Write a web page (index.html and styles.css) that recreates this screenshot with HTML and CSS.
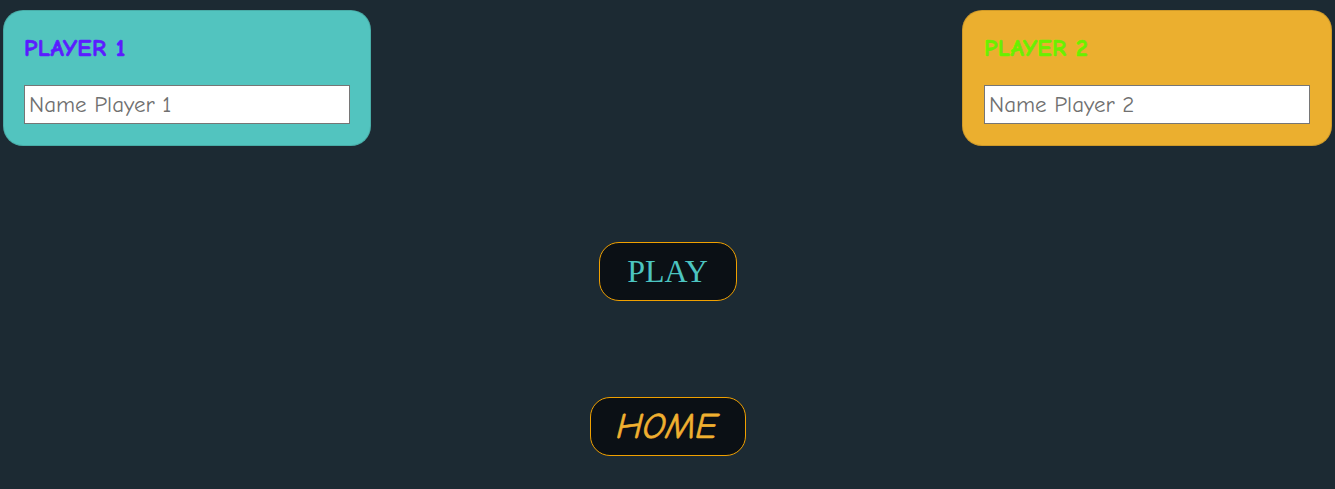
FILE: index.html
```html
<!DOCTYPE html>
<html lang="en">
<head>
    <meta charset="UTF-8">
    <title>Players</title>
    <link rel="stylesheet" href="styles.css">
</head>
<body>
    <div class="players">
        <div class="player player-one">
            <h2>PLAYER 1</h2>
            <input type="text" placeholder="Name Player 1">
        </div>
        <div class="player player-two">
            <h2>PLAYER 2</h2>
            <input type="text" placeholder="Name Player 2">
        </div>
    </div>
    <div class="actions">
        <button class="play">PLAY</button>
        <button class="home"><span>HOME</span></button>
    </div>
</body>
</html>
```

FILE: styles.css
```css
body {
    margin: 0;
    padding: 10px 3px;
    background-color: #1c2a33;
    font-family: "Comic Sans MS", "Comic Neue", "Open Sans", sans-serif;
}
.players {
    display: flex;
    justify-content: space-between;
}
.player {
    width: 326px;
    padding: 23px 20px 21px;
    border-radius: 20px;
    border: 1px solid rgba(0, 0, 0, 0.12);
}
.player h2 {
    margin: 0 0 23px;
    font-size: 24px;
    line-height: 28px;
    font-weight: bold;
    -webkit-text-stroke: 0.7px currentColor;
    letter-spacing: 0.5px;
}
.player-one {
    background-color: #52c4bf;
}
.player-one h2 {
    color: #5b1cff;
}
.player-two {
    background-color: #ebaf2f;
    padding-left: 21px;
    padding-right: 21px;
}
.player-two h2 {
    color: #6af000;
}
.player input {
    display: block;
    box-sizing: border-box;
    width: 326px;
    height: 39px;
    margin: 0;
    padding: 0 4px;
    border: 1px solid #767676;
    background: white;
    font-family: inherit;
    font-size: 23px;
    color: #333;
}
.player input::placeholder {
    color: #707070;
}
.actions {
    display: flex;
    flex-direction: column;
    align-items: center;
    gap: 96px;
    margin-top: 96px;
}
.actions button {
    box-sizing: border-box;
    background-color: #0b1015;
    border: 1px solid #f0a000;
    border-radius: 20px;
    height: 59px;
    padding: 0;
    cursor: pointer;
}
.play {
    width: 138px;
    font-family: "Liberation Serif", serif;
    font-size: 32px;
    color: #4cc4c0;
}
.home {
    width: 156px;
    height: 58px;
    font-family: inherit;
    font-size: 36px;
    color: #f0b030;
}
.home span {
    display: inline-block;
    transform: skewX(-14deg);
    -webkit-text-stroke: 0.6px currentColor;
}
```
